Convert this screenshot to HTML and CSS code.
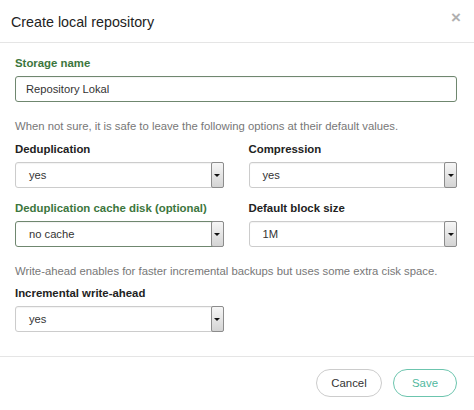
FILE: index.html
```html
<!DOCTYPE html>
<html>
<head>
<meta charset="utf-8">
<link rel="stylesheet" href="styles.css">
</head>
<body>
<div class="modal">
  <div class="modal-header">
    <h4 class="title">Create local repository</h4>
    <span class="close">&times;</span>
  </div>
  <div class="modal-body">
    <div class="field success">
      <label class="label">Storage name</label>
      <div class="input">Repository Lokal</div>
    </div>
    <p class="help">When not sure, it is safe to leave the following options at their default values.</p>
    <div class="grid">
      <div class="field">
        <label class="label">Deduplication</label>
        <div class="select"><span class="value">yes</span><span class="arrow"><span class="tri"></span></span></div>
      </div>
      <div class="field">
        <label class="label">Compression</label>
        <div class="select"><span class="value">yes</span><span class="arrow"><span class="tri"></span></span></div>
      </div>
      <div class="field success">
        <label class="label">Deduplication cache disk (optional)</label>
        <div class="select"><span class="value">no cache</span><span class="arrow"><span class="tri"></span></span></div>
      </div>
      <div class="field">
        <label class="label">Default block size</label>
        <div class="select"><span class="value">1M</span><span class="arrow"><span class="tri"></span></span></div>
      </div>
    </div>
    <p class="help help2">Write-ahead enables for faster incremental backups but uses some extra cisk space.</p>
    <div class="grid">
      <div class="field">
        <label class="label">Incremental write-ahead</label>
        <div class="select"><span class="value">yes</span><span class="arrow"><span class="tri"></span></span></div>
      </div>
    </div>
  </div>
  <div class="modal-footer">
    <button class="btn btn-cancel">Cancel</button>
    <button class="btn btn-save">Save</button>
  </div>
</div>
</body>
</html>
```

FILE: styles.css
```css
* { box-sizing: border-box; }
html, body {
  margin: 0;
  padding: 0;
  background: #fff;
  font-family: "Liberation Sans", Arial, sans-serif;
  color: #333;
}
.modal {
  width: 474px;
  height: 410px;
  background: #fff;
}
.modal-header {
  height: 43px;
  display: flex;
  align-items: center;
  padding: 0 13px 0 11px;
  border-bottom: 1px solid #e5e5e5;
}
.title {
  margin: 0;
  font-size: 14.3px;
  font-weight: normal;
  color: #222;
  flex: 1;
  padding-top: 1px;
}
.close {
  font-size: 17px;
  font-weight: bold;
  color: #b0b0b0;
  line-height: 1;
  margin-top: -7px;
}
.modal-body {
  padding: 13px 17px 24px 15px;
}
.field {
  display: flex;
  flex-direction: column;
}
.label {
  display: block;
  font-size: 11.4px;
  font-weight: bold;
  line-height: 15px;
  color: #222;
  margin-bottom: 5px;
}
.success .label { color: #3c763d; }
.input, .select {
  height: 26px;
  border: 1px solid #ccc;
  border-radius: 3px;
  font-size: 11.2px;
  color: #333;
  display: flex;
  align-items: center;
  box-shadow: inset 0 1px 1px rgba(0,0,0,0.05);
}
.input { padding-left: 10px; }
.success .input, .success .select { border-color: #6f876f; }
.select .value {
  flex: 1;
  padding-left: 13px;
}
.arrow {
  width: 13px;
  height: 26px;
  margin: -1px -1px -1px 0;
  border: 1px solid #8c8c8c;
  border-radius: 2px;
  background: linear-gradient(#f6f6f6, #d4d4d4);
  display: flex;
  align-items: center;
  justify-content: center;
}
.tri {
  width: 0;
  height: 0;
  border-left: 3px solid transparent;
  border-right: 3px solid transparent;
  border-top: 3px solid #111;
}
.help {
  margin: 17px 0 8px;
  font-size: 11.3px;
  line-height: 15px;
  color: #777;
}
.help2 { margin-bottom: 7px; }
.grid {
  display: grid;
  grid-template-columns: 1fr 1fr;
  column-gap: 25px;
  row-gap: 13px;
}
.modal-footer {
  border-top: 1px solid #e5e5e5;
  display: flex;
  justify-content: flex-end;
  gap: 11px;
  padding: 12px 17px 0 0;
}
.btn {
  height: 28px;
  border-radius: 14px;
  background: #fff;
  font-family: "Liberation Sans", Arial, sans-serif;
  font-size: 11.4px;
  padding: 0;
  cursor: pointer;
}
.btn-cancel {
  width: 66px;
  border: 1px solid #ccc;
  color: #333;
}
.btn-save {
  width: 64px;
  border: 1px solid #6cc5ae;
  color: #4fb89e;
}
```
